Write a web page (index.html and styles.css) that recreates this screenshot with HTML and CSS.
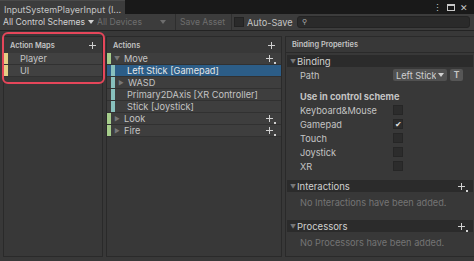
FILE: index.html
```html
<!DOCTYPE html>
<html lang="en">
<head>
  <meta charset="UTF-8" />
  <title>InputSystemPlayerInput</title>
  <link rel="stylesheet" href="styles.css">
</head>
<body>
  <div class="titlebar">
    <div class="tab">InputSystemPlayerInput (I...</div>
    <div class="win-icons"><span class="dots">⋮</span><span class="maxi"></span><span class="close">✕</span></div>
  </div>

  <div class="toolbar">
    <div class="drop strong">All Control Schemes<span class="tri"></span></div>
    <div class="drop dim devices">All Devices<span class="tri"></span></div>
    <div class="btn dim">Save Asset</div>
    <div class="check-label"><span class="box"></span>Auto-Save</div>
    <div class="search"><span class="lens">⚲</span></div>
  </div>

  <div class="main">
    <div class="panel maps">
      <div class="head">Action Maps <span class="plus"></span></div>
      <div class="row map"><span class="bar yellow"></span><span class="lbl">Player</span></div>
      <div class="row map"><span class="bar yellow"></span><span class="lbl">UI</span></div>
      <div class="highlight"></div>
    </div>

    <div class="panel actions">
      <div class="head">Actions <span class="plus"></span></div>
      <div class="row"><span class="bar green"></span><span class="fold">▼</span><span class="lbl">Move</span><span class="plus sm"><i></i></span></div>
      <div class="row sub selected"><span class="bar teal"></span><span class="lbl">Left Stick [Gamepad]</span></div>
      <div class="row sub"><span class="bar teal"></span><span class="fold">▶</span><span class="lbl">WASD</span></div>
      <div class="row sub"><span class="bar teal"></span><span class="lbl">Primary2DAxis [XR Controller]</span></div>
      <div class="row sub"><span class="bar teal"></span><span class="lbl">Stick [Joystick]</span></div>
      <div class="row"><span class="bar green"></span><span class="fold">▶</span><span class="lbl">Look</span><span class="plus sm"><i></i></span></div>
      <div class="row"><span class="bar green"></span><span class="fold">▶</span><span class="lbl">Fire</span><span class="plus sm"><i></i></span></div>
    </div>

    <div class="panel props">
      <div class="head">Binding Properties</div>
      <div class="section">
        <div class="fhead"><span class="fold">▼</span>Binding</div>
        <div class="field path"><span class="fl">Path</span><span class="pathdrop"><span class="ptext">Left Stick [G</span><span class="tri"></span></span><span class="tbtn">T</span></div>
        <div class="sub-title">Use in control scheme</div>
        <div class="field"><span class="fl">Keyboard&amp;Mouse</span><span class="cb"></span></div>
        <div class="field"><span class="fl">Gamepad</span><span class="cb">✔</span></div>
        <div class="field"><span class="fl">Touch</span><span class="cb"></span></div>
        <div class="field"><span class="fl">Joystick</span><span class="cb"></span></div>
        <div class="field"><span class="fl">XR</span><span class="cb"></span></div>
      </div>
      <div class="section gap">
        <div class="fhead"><span class="fold">▼</span>Interactions<span class="plus sm"><i></i></span></div>
        <div class="empty">No Interactions have been added.</div>
      </div>
      <div class="section">
        <div class="fhead"><span class="fold">▼</span>Processors<span class="plus sm"><i></i></span></div>
        <div class="empty">No Processors have been added.</div>
      </div>
    </div>
  </div>
</body>
</html>
```

FILE: styles.css
```css
* { box-sizing: border-box; }
body { margin: 0; width: 474px; height: 261px; overflow: hidden; background: #383838; color: #c4c4c4; font-family: Inter, "Noto Sans", sans-serif; font-size: 9.2px; }

.titlebar { height: 14px; background: #191919; display: flex; justify-content: space-between; align-items: stretch; }
.tab { width: 125px; background: #3c3c3c; padding: 3px 0 0 4px; font-size: 9px; line-height: 11px; border-top: 1px solid #4a4a4a; white-space: nowrap; }
.win-icons { display: flex; gap: 5px; align-items: center; padding-right: 6px; color: #c8c8c8; font-size: 9px; }
.maxi { width: 8px; height: 7px; border: 1px solid #c8c8c8; border-top-width: 2px; }

.toolbar { height: 17px; background: #3c3c3c; border-bottom: 1px solid #232323; display: flex; align-items: center; padding-left: 3px; white-space: nowrap; font-size: 8.6px; }
.drop { display: flex; align-items: center; gap: 3px; }
.tri { width: 0; height: 0; border-left: 3px solid transparent; border-right: 3px solid transparent; border-top: 4px solid currentColor; flex: none; }
.strong { color: #d2d2d2; width: 94px; }
.dim { color: #6e6e6e; }
.devices { width: 78px; justify-content: space-between; padding-right: 9px; }
.btn { width: 56px; padding-left: 4px; border-left: 1px solid #2e2e2e; height: 100%; display: flex; align-items: center; }
.check-label { display: flex; align-items: center; gap: 3px; width: 66px; height: 100%; border-left: 1px solid #2e2e2e; padding-left: 2px; font-size: 9.2px; }
.box { width: 10px; height: 10px; background: #2a2a2a; border: 1px solid #222; }
.search { flex: 1; height: 12px; margin-right: 4px; background: #2a2a2a; border: 1px solid #232323; border-radius: 3px; font-size: 7px; padding-left: 4px; color: #aaa; line-height: 10px; }

.main { display: flex; height: 230px; padding: 5px 0 4px 3px; gap: 3px; }
.panel { background: #383838; border: 1px solid #2a2a2a; position: relative; }
.maps { width: 100px; }
.actions { width: 176px; }
.props { flex: 1; border-right: none; }

.head { height: 16px; display: flex; align-items: center; justify-content: space-between; padding: 0 6px 0 6px; font-size: 7.4px; font-weight: 600; color: #c4c4c4; }

/* plus icons drawn with two bars */
.plus { width: 7px; height: 7px; position: relative; flex: none; }
.plus::before, .plus::after { content: ""; position: absolute; background: #d0d0d0; }
.plus::before { left: 3px; top: 0; width: 1.4px; height: 7px; }
.plus::after { left: 0; top: 3px; width: 7px; height: 1.4px; }
.plus i { position: absolute; right: -3px; bottom: -2px; width: 2px; height: 2px; background: #d0d0d0; }
.row .plus, .fhead .plus { margin-left: auto; margin-right: 8px; }

.row { height: 12px; display: flex; align-items: center; background: #3e3e3e; border-bottom: 1px solid #313131; white-space: nowrap; }
.map { background: #414141; }
.bar { width: 4px; height: 100%; flex: none; }
.yellow { background: #e3cf86; }
.green { background: #a6cd8b; }
.teal { background: #88c0bd; }
.sub .bar { margin-left: 4px; }
.fold { font-size: 6px; color: #777; width: 10px; text-align: center; margin-left: 1px; }
.row .lbl { padding-left: 2px; }
.map .lbl { padding-left: 12px; }
.sub .lbl { padding-left: 12px; }
.sub .fold + .lbl { padding-left: 2px; }
.selected { background: #2c5d87; color: #e6e6e6; }

.highlight { position: absolute; left: -2px; top: -5px; width: 103px; height: 52px; border: 2px solid #e6465a; border-radius: 6px; }

.props .head { border-bottom: 1px solid #2a2a2a; height: 16px; }
.section { padding: 2px 1px 0 1px; }
.section.gap { padding-top: 7px; }
.fhead { height: 12px; background: #2b2b2b; display: flex; align-items: center; color: #d0d0d0; font-size: 9.5px; }
.fhead .fold { margin-left: 2px; width: 8px; }
.field { height: 14px; display: flex; align-items: center; padding-left: 13px; }
.field.path { margin: 1px 0 8px; }
.fl { width: 93px; }
.pathdrop { width: 54px; height: 12px; background: #515151; border-radius: 2px; padding: 0 3px 0 3px; display: flex; align-items: center; gap: 2px; color: #d0d0d0; }
.ptext { flex: 1; min-width: 0; overflow: hidden; white-space: nowrap; }
.tbtn { width: 13px; height: 12px; background: #565656; border-radius: 2px; margin-left: 3px; text-align: center; line-height: 12px; font-weight: 700; font-size: 8.5px; }
.sub-title { padding-left: 13px; font-weight: 700; height: 13px; line-height: 13px; }
.cb { width: 10px; height: 10px; background: #2c2c2c; border: 1px solid #262626; font-size: 8px; line-height: 9px; text-align: center; color: #e0e0e0; }
.empty { color: #747474; padding: 5px 0 0 13px; height: 26px; }
```
